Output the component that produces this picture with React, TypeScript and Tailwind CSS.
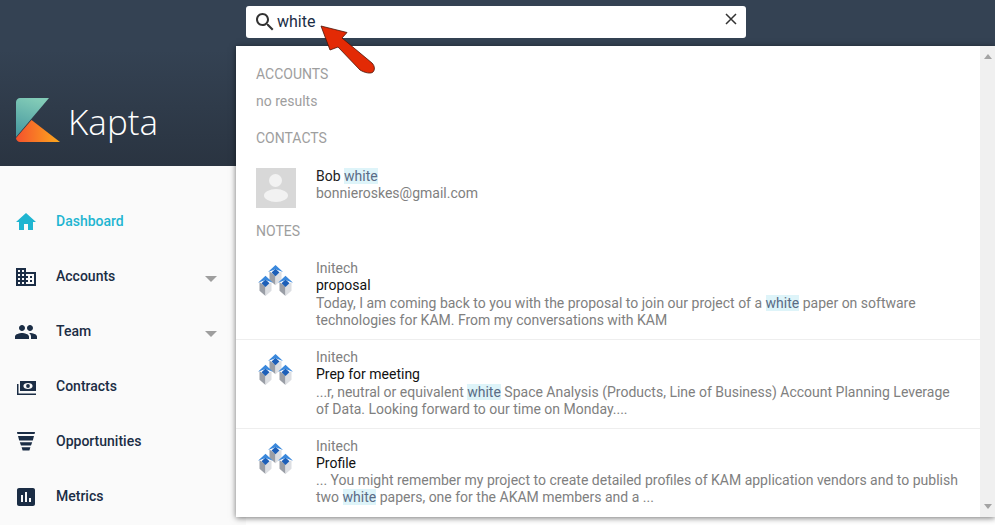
import React from 'react';

const Mark = ({ children }: { children: React.ReactNode }) => (
  <span className="bg-[#def4f9] text-[#5a6b85]">{children}</span>
);

const Icon: React.FC<{ d: string; className?: string }> = ({ d, className }) => (
  <svg viewBox="0 0 24 24" width="24" height="24" fill="currentColor" className={className}>
    <path d={d} />
  </svg>
);

const ContractsIcon = () => (
  <svg viewBox="0 0 24 24" width="24" height="24" fill="#1b2d45">
    <path fillRule="evenodd" d="M6 6h16v10H6zM14 8c-2.600 0-4.600 1.300-4.600 3s2 3 4.600 3 4.600-1.300 4.600-3-2-3-4.600-3z" />
    <circle cx="14" cy="11" r="1.900" />
    <path d="M3 9h1.500v9.500H22V20H3z" />
  </svg>
);

const FunnelIcon = () => (
  <svg viewBox="0 0 24 24" width="24" height="24" fill="#1b2d45">
    <path d="M3 2h18l-.4 2H3.400zM4 6h16l-1.200 4.500H5.200zM5.800 12.200h12.400l-1.200 3.400H7zM7.600 17.200h8.800L15.400 20.500H8.600z" />
  </svg>
);

const nav = [
  { label: 'Dashboard', active: true, icon: <Icon d="M10 20v-6h4v6h5v-8h3L12 3 2 12h3v8z" /> },
  { label: 'Accounts', caret: true, icon: <Icon d="M12 7V3H2v18h20V7H12zM6 19H4v-2h2v2zm0-4H4v-2h2v2zm0-4H4V9h2v2zm0-4H4V5h2v2zm4 12H8v-2h2v2zm0-4H8v-2h2v2zm0-4H8V9h2v2zm0-4H8V5h2v2zm10 12h-8v-2h2v-2h-2v-2h2v-2h-2V9h8v10zm-2-8h-2v2h2v-2zm0 4h-2v2h2v-2z" /> },
  { label: 'Team', caret: true, icon: <Icon d="M16 11c1.660 0 2.990-1.340 2.990-3S17.660 5 16 5c-1.660 0-3 1.340-3 3s1.340 3 3 3zm-8 0c1.660 0 2.990-1.340 2.990-3S9.660 5 8 5C6.340 5 5 6.340 5 8s1.340 3 3 3zm0 2c-2.330 0-7 1.170-7 3.500V19h14v-2.500c0-2.330-4.670-3.500-7-3.500zm8 0c-.290 0-.620.020-.970.050 1.160.840 1.970 1.970 1.970 3.450V19h6v-2.500c0-2.330-4.670-3.500-7-3.500z" /> },
  { label: 'Contracts', icon: <ContractsIcon /> },
  { label: 'Opportunities', icon: <FunnelIcon /> },
  { label: 'Metrics', icon: <Icon d="M19 3H5c-1.100 0-2 .9-2 2v14c0 1.100.9 2 2 2h14c1.100 0 2-.9 2-2V5c0-1.100-.9-2-2-2zM9 17H7v-7h2v7zm4 0h-2V7h2v10zm4 0h-2v-4h2v4z" /> },
];

const Logo = () => (
  <svg viewBox="0 0 44 44" width="44" height="44">
    <defs>
      <linearGradient id="kTeal" x1="0.5" y1="0" x2="0.2" y2="1">
        <stop offset="0%" stopColor="#82cbb7" />
        <stop offset="100%" stopColor="#46989f" />
      </linearGradient>
      <linearGradient id="kOrange" x1="0" y1="0" x2="1" y2="0">
        <stop offset="0%" stopColor="#f4512d" />
        <stop offset="100%" stopColor="#fda91d" />
      </linearGradient>
    </defs>
    <path d="M4 0H33L0 39V4C0 2 2 0 4 0Z" fill="url(#kTeal)" />
    <path d="M15.500 22L44 44H4C2 44 0 42 0 40Z" fill="url(#kOrange)" />
  </svg>
);

const HouseBlock = ({ x, y }: { x: number; y: number }) => (
  <g transform={`translate(${x} ${y})`}>
    <path d="M1 6v8l6 5V10z" fill="#9a9ea6" />
    <path d="M13 6v8l-6 5V10z" fill="#dcdee2" />
    <path d="M7 3.500L11 7l-4 3.500L3 7z" fill="#1d5fb8" />
    <path d="M-.5 6.500L7 0l7.500 6.500L7 4z" fill="#3a88dc" />
  </g>
);

const NoteLogo = () => (
  <svg viewBox="-0.5 0 35 29" width="35" height="31" preserveAspectRatio="none" className="ml-0.5 blur-[0.5px]">
    <HouseBlock x={10} y={0} />
    <HouseBlock x={0} y={10} />
    <HouseBlock x={20} y={10} />
  </svg>
);

const notes = [
  {
    title: 'proposal',
    lines: [
      <>Today, I am coming back to you with the proposal to join our project of a <Mark>white</Mark> paper on software</>,
      <>technologies for KAM. From my conversations with KAM</>,
    ],
  },
  {
    title: 'Prep for meeting',
    lines: [
      <>...r, neutral or equivalent <Mark>white</Mark> Space Analysis (Products, Line of Business) Account Planning Leverage</>,
      <>of Data. Looking forward to our time on Monday....</>,
    ],
  },
  {
    title: 'Profile',
    lines: [
      <>... You might remember my project to create detailed profiles of KAM application vendors and to publish</>,
      <>two <Mark>white</Mark> papers, one for the AKAM members and a ...</>,
    ],
  },
];

export default function App() {
  return (
    <div className="relative w-[995px] h-[525px] overflow-hidden bg-white font-['Roboto',sans-serif] text-sm leading-[17px]">
      {/* Sidebar */}
      <div className="w-[246px] h-full bg-[#fafafa] flex flex-col">
        <div className="h-[166px] flex items-end gap-[8px] pl-4 pb-6 bg-linear-to-b from-[#344253] from-30% to-[#2a3441]">
          <Logo />
          <span className="font-['Open_Sans',sans-serif] font-light text-[35px] leading-[40px] text-white">Kapta</span>
        </div>
        <div className="pt-[28px]">
          {nav.map(item => (
            <div
              key={item.label}
              className={`h-[55px] flex items-center pl-[14px] pr-[29px] font-medium ${item.active ? 'text-[#1fb5d1]' : 'text-[#1b2d45]'}`}
            >
              <span className="w-[42px] shrink-0">{item.icon}</span>
              <span className="flex-1">{item.label}</span>
              {item.caret && <span className="mt-1 border-x-[6px] border-t-[6px] border-x-transparent border-t-[#9e9e9e]" />}
            </div>
          ))}
        </div>
      </div>

      {/* Top bar with the search field */}
      <div className="absolute top-0 left-[246px] right-0 h-[46px] bg-[#344253]">
        <div className="mt-1.5 w-[500px] h-8 bg-white rounded-[3px] flex items-center pl-[7px] pr-[9px] text-[#1b2d45]">
          <Icon className="text-[#333]" d="M15.500 14h-.790l-.280-.270C15.410 12.590 16 11.110 16 9.500 16 5.910 13.090 3 9.500 3S3 5.910 3 9.500 5.910 16 9.500 16c1.610 0 3.090-.590 4.230-1.570l.270.280v.790l5 4.990L20.490 19l-4.990-5zm-6 0C7.010 14 5 11.990 5 9.500S7.010 5 9.500 5 14 7.010 14 9.500 11.990 14 9.500 14z" />
          <span className="flex-1 text-base">white</span>
          <svg viewBox="0 0 12 12" width="12" height="12" stroke="#333" strokeWidth="1.500" className="mb-[6px]">
            <path d="M1 1l10 10M11 1L1 11" />
          </svg>
        </div>
      </div>

      {/* Search results */}
      <div className="absolute top-[46px] left-[236px] w-[759px] h-[471px] flex bg-white shadow-[0_1px_6px_rgba(0,0,0,0.55)]">
        <div className="flex-1 text-[#808080]">
          <div className="pl-5 pt-5 text-[#9e9e9e]">ACCOUNTS</div>
          <div className="pl-5 pt-2.5 text-[#9e9e9e]">no results</div>
          <div className="pl-5 pt-5 text-[#9e9e9e]">CONTACTS</div>
          <div className="pl-5 pt-[21px] flex gap-5 h-[61px]">
            <div className="relative w-10 h-10 bg-[#d8d8d8] overflow-hidden shrink-0">
              <div className="absolute left-[13px] top-[6px] w-[13px] h-[13px] rounded-full bg-[#f2f2f2]" />
              <div className="absolute left-[8px] top-[21px] w-6 h-[13px] rounded-[50%] bg-[#f2f2f2]" />
            </div>
            <div>
              <div className="text-[#212121]">Bob <Mark>white</Mark></div>
              <div>bonnieroskes@gmail.com</div>
            </div>
          </div>
          <div className="pl-5 pt-[15px] text-[#9e9e9e]">NOTES</div>
          <div className="pt-[11px]">
            {notes.map((n, i) => (
              <div key={n.title} className={`pl-5 flex gap-5 ${i > 0 ? 'h-[89px] border-t border-[#eeeeee] pt-[9px]' : 'h-[88px] pt-[9px]'}`}>
                <div className="w-10 shrink-0 pt-[5px]"><NoteLogo /></div>
                <div className="whitespace-nowrap">
                  <div>Initech</div>
                  <div className="text-[#111]">{n.title}</div>
                  <div className={i < 2 ? 'mt-px' : ''}>
                    {n.lines.map((line, j) => <div key={j}>{line}</div>)}
                  </div>
                </div>
              </div>
            ))}
          </div>
        </div>
        <div className="w-[15px] bg-[#f0f0f0] flex flex-col items-center justify-between pt-[8px] pb-[8px]">
          <span className="border-x-[4px] border-b-[5px] border-x-transparent border-b-[#a3a3a3]" />
          <span className="border-x-[4px] border-t-[5px] border-x-transparent border-t-[#a3a3a3]" />
        </div>
      </div>

      {/* Annotation arrow */}
      <svg width="70" height="60" viewBox="0 0 70 60" className="absolute left-[315px] top-[20px]">
        <path
          d="M6 6L32 12.500L27 18L57 43C60 46 60 50 58 52C56 54 50 53 45 50L23 27L15 30Z"
          fill="#e32a05"
          stroke="#4a1408"
          strokeWidth="0.8"
        />
      </svg>
    </div>
  );
}
